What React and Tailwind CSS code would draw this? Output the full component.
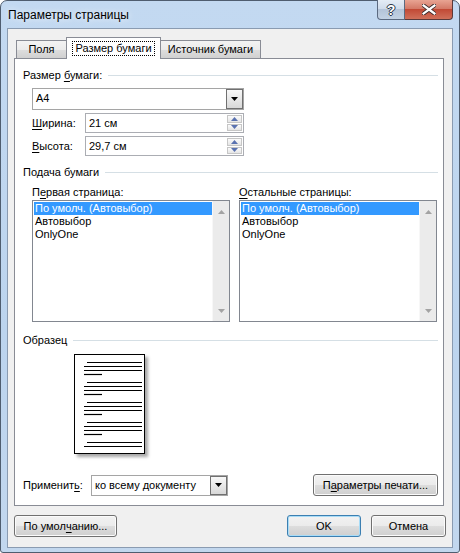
import React from 'react';

// Win7 "Параметры страницы" dialog
const font = "font-['Liberation_Sans',Arial,sans-serif]";

function U({ children }) {
  return <span className="underline decoration-1 underline-offset-[2px]">{children}</span>;
}

function SectionTitle({ children, className = '' }) {
  return (
    <div className={`flex h-[14px] items-center pl-[8px] pr-[5px] ${className}`}>
      <span className="leading-[14px]">{children}</span>
      <div className="ml-[6px] h-px flex-1 bg-[#d5dfe5]" />
    </div>
  );
}

function DropArrow() {
  return (
    <svg width="7" height="4" viewBox="0 0 7 4">
      <path d="M0 0h7L3.5 4z" fill="#000" />
    </svg>
  );
}

function Combo({ value, className = '' }) {
  return (
    <div className={`flex border border-[#a5a5a5] bg-white ${className}`}>
      <div className="flex-1 pl-[3px] leading-[19px]">{value}</div>
      <div className="flex w-[17px] items-center justify-center border border-[#707070] bg-[linear-gradient(#f8f8f8,#e8e8e8_50%,#d8d8d8)]">
        <DropArrow />
      </div>
    </div>
  );
}

function SpinArrow({ up }) {
  return (
    <svg width="7" height="4" viewBox="0 0 7 4">
      <path d={up ? 'M0 4h7L3.5 0z' : 'M0 0h7L3.5 4z'} fill="#5a72b0" />
    </svg>
  );
}

function Spin({ value }) {
  return (
    <div className="flex h-[20px] w-[159px] border border-[#abadb3] bg-white">
      <div className="flex-1 pl-[3px] leading-[18px]">{value}</div>
      <div className="flex w-[16px] flex-col gap-px py-px pr-px">
        <div className="flex flex-1 items-center justify-center border border-[#c6c6c6] bg-[linear-gradient(#fbfbfb,#e5e5e5)]">
          <SpinArrow up />
        </div>
        <div className="flex flex-1 items-center justify-center border border-[#c6c6c6] bg-[linear-gradient(#fbfbfb,#e5e5e5)]">
          <SpinArrow />
        </div>
      </div>
    </div>
  );
}

function ScrollArrow({ up }) {
  return (
    <svg width="7" height="4" viewBox="0 0 7 4">
      <path d={up ? 'M0 4h7L3.5 0z' : 'M0 0h7L3.5 4z'} fill="#a3a3a3" />
    </svg>
  );
}

function ListBox() {
  const items = ['По умолч. (Автовыбор)', 'Автовыбор', 'OnlyOne'];
  return (
    <div className="flex h-[122px] w-[198px] border border-[#828790] bg-white">
      <div className="flex-1 pl-px pt-px">
        {items.map((t, i) => (
          <div
            key={t}
            className={`h-[13px] whitespace-nowrap pl-px leading-[13px] ${i === 0 ? 'bg-[#3399ff] text-white' : ''}`}
          >
            {t}
          </div>
        ))}
      </div>
      <div className="flex w-[17px] flex-col items-center justify-between border-l border-[#f7f7f7] bg-[#ebebeb] pb-[8px] pt-[9px]">
        <ScrollArrow up />
        <ScrollArrow />
      </div>
    </div>
  );
}

function Btn({ children, className = '', focused = false }) {
  return (
    <div
      className={`flex h-[22px] items-center justify-center rounded-[3px] border bg-[linear-gradient(#f2f2f2,#ebebeb_50%,#dddddd_50%,#cfcfcf)] ${
        focused ? 'border-[#3c7fb1] shadow-[inset_0_0_0_1px_#a8dcf7]' : 'border-[#707070] shadow-[inset_0_0_0_1px_#fbfbfb]'
      } ${className}`}
    >
      {children}
    </div>
  );
}

function PagePreview() {
  const paras = [0, 20, 40, 60];
  return (
    <div className="ml-[59px] mt-[7px] h-[100px] w-[71px] border border-black bg-white shadow-[3px_3px_3px_rgba(0,0,0,0.35)]">
      <svg width="69" height="98" viewBox="0 0 69 98">
        {paras.map((y) => (
          <g key={y} stroke="#000" strokeWidth="1.2">
            <line x1="12" x2="67" y1={y + 7.5} y2={y + 7.5} />
            <line x1="9" x2="67" y1={y + 11.5} y2={y + 11.5} />
            <line x1="9" x2="67" y1={y + 15.5} y2={y + 15.5} />
            <line x1="9" x2="27" y1={y + 19.5} y2={y + 19.5} />
          </g>
        ))}
        <g stroke="#000" strokeWidth="1.2">
          <line x1="12" x2="67" y1="87.5" y2="87.5" />
          <line x1="9" x2="67" y1="91.5" y2="91.5" />
        </g>
      </svg>
    </div>
  );
}

export default function App() {
  return (
    <div className={`${font} h-[553px] w-[460px] bg-white text-[11px] text-black`}>
      <div className="flex h-[553px] w-[460px] flex-col rounded-t-[7px] rounded-b-[3px] border border-[#4f5d6f] bg-[linear-gradient(#c3d9f1,#bcd4ee_60%,#c2d7ee)]">
        {/* title bar */}
        <div className="flex h-[27px] shrink-0">
          <div className="pl-[7px] pt-[7px] text-[12px] leading-[14px] text-black [text-shadow:0_0_6px_#ffffff]">
            Параметры страницы
          </div>
          <div className="ml-auto mr-[6px] -mt-px flex h-[20px]">
            <div className="flex w-[28px] items-center justify-center rounded-bl-[4px] border border-t-0 border-[#5b6a80] bg-[linear-gradient(#e4ecf5,#d0dceb_45%,#b4c4d8_50%,#c3d2e4)] text-[14px] font-bold leading-none text-white [text-shadow:1px_0_0_#2a3646,-1px_0_0_#2a3646,0_1px_0_#2a3646,0_-1px_0_#2a3646]">
              ?
            </div>
            <div className="flex w-[48px] items-center justify-center rounded-br-[4px] border border-l-0 border-t-0 border-[#5b3a3a] bg-[linear-gradient(#e8a493,#d47a68_45%,#c24a36_50%,#d0705a)]">
              <svg width="14" height="11" viewBox="0 0 14 11">
                <path d="M1 1L13 10M13 1L1 10" stroke="#3b2a2a" strokeWidth="4" strokeLinecap="square" />
                <path d="M1.5 1.5L12.5 9.5M12.5 1.5L1.5 9.5" stroke="#fff" strokeWidth="2.2" strokeLinecap="square" />
              </svg>
            </div>
          </div>
        </div>

        {/* client area */}
        <div className="ml-[6px] flex h-[520px] w-[446px] flex-col border border-[#8a9bb1] bg-[#f0f0f0]">
          {/* tabs */}
          <div className="ml-[7px] mt-[8px] flex h-[22px] items-end pl-[1px]">
            <div className="flex h-[19px] w-[51px] items-center justify-center border border-b-0 border-[#898c95] bg-[linear-gradient(#f3f3f3,#ebebeb_50%,#dddddd_50%,#cfcfcf)] pb-[1px]">
              Поля
            </div>
            <div className="relative z-10 -ml-px flex h-[22px] w-[95px] items-start justify-center border border-b-0 border-[#898c95] bg-white pt-[3px]">
              <span className="border border-dotted border-black px-[2px] leading-[13px]">Размер бумаги</span>
            </div>
            <div className="-ml-px flex h-[19px] w-[101px] items-center justify-center border border-b-0 border-[#898c95] bg-[linear-gradient(#f3f3f3,#ebebeb_50%,#dddddd_50%,#cfcfcf)] pb-[1px]">
              Источник бумаги
            </div>
          </div>

          {/* panel */}
          <div className="ml-[6px] -mt-px flex h-[448px] w-[430px] flex-col border border-[#898c95] bg-white">
            <SectionTitle className="mt-[9px]">
              Размер <U>б</U>умаги:
            </SectionTitle>
            <Combo value="A4" className="ml-[17px] mt-[6px] h-[22px] w-[212px]" />
            <div className="ml-[17px] mt-[3px] flex items-center">
              <span className="w-[53px]">
                <U>Ш</U>ирина:
              </span>
              <Spin value="21 см" />
            </div>
            <div className="ml-[17px] mt-[3px] flex items-center">
              <span className="w-[53px]">
                <U>В</U>ысота:
              </span>
              <Spin value="29,7 см" />
            </div>

            <SectionTitle className="mt-[9px]">Подача бумаги</SectionTitle>
            <div className="ml-[17px] mt-[6px] flex gap-[9px]">
              <div className="flex flex-col">
                <div className="h-[15px] leading-[14px]">
                  П<U>е</U>рвая страница:
                </div>
                <ListBox />
              </div>
              <div className="flex flex-col">
                <div className="h-[15px] leading-[14px]">
                  <U>О</U>стальные страницы:
                </div>
                <ListBox />
              </div>
            </div>

            <SectionTitle className="mt-[11px]">Образец</SectionTitle>
            <PagePreview />

            <div className="mb-[9px] mt-auto flex h-[22px] items-center pl-[8px] pr-[5px]">
              <span className="w-[68px]">
                Применит<U>ь</U>:
              </span>
              <Combo value="ко всему документу" className="h-[21px] w-[137px]" />
              <Btn className="ml-auto w-[125px]">
                П<U>а</U>раметры печати...
              </Btn>
            </div>
          </div>

          {/* bottom buttons */}
          <div className="ml-[6px] mr-[6px] mt-[9px] flex">
            <Btn className="w-[103px]">
              По умол<U>ч</U>анию...
            </Btn>
            <Btn focused className="ml-auto w-[74px]">
              OK
            </Btn>
            <Btn className="ml-[10px] w-[75px]">Отмена</Btn>
          </div>
        </div>
      </div>
    </div>
  );
}
